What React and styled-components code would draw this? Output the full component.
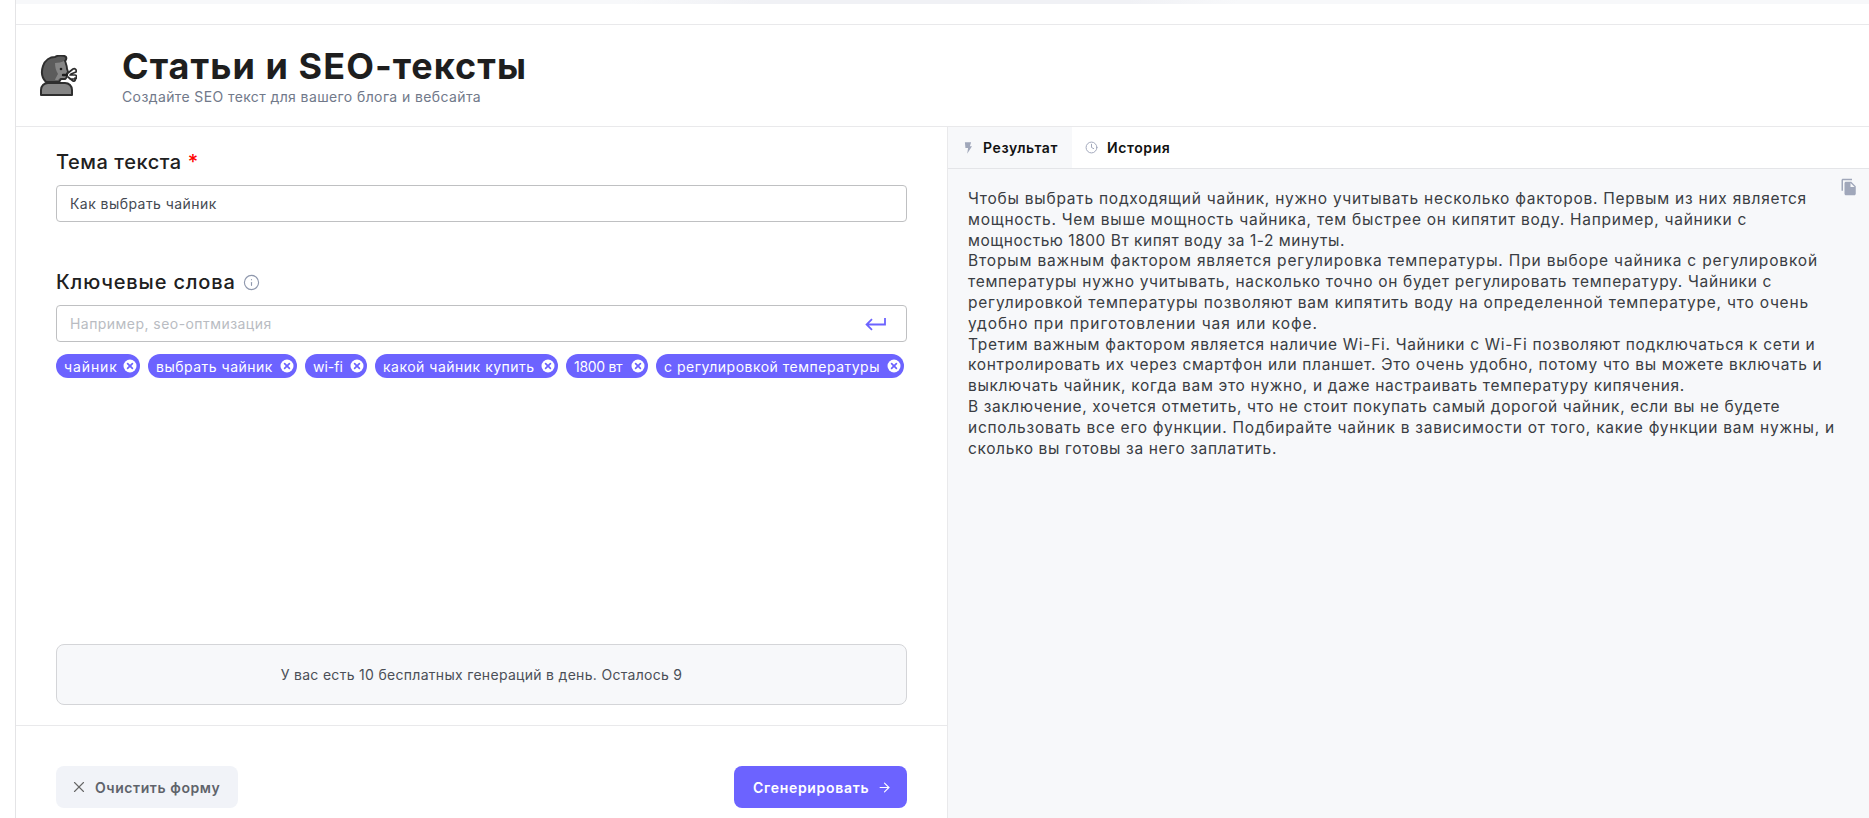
import React from "react";
import styled, { createGlobalStyle } from "styled-components";
import { MdFileCopy } from "react-icons/md";
import { X, ArrowRight, Info, Clock } from "lucide-react";

const Global = createGlobalStyle`
  html, body { margin: 0; padding: 0; background: #fff; }
  body { font-family: Inter, "Noto Sans", "Liberation Sans", sans-serif; color: #1f1f1f; overflow: hidden; }
  * { box-sizing: border-box; }
`;

const Shell = styled.div`display: flex; width: 1869px; height: 818px; overflow: hidden;`;
const Rail = styled.div`width: 16px; flex: none; border-right: 1px solid #e4e4e6;`;
const Main = styled.div`flex: 1; display: flex; flex-direction: column; min-width: 0;`;
const TopStrip = styled.div`
  height: 25px; flex: none; border-bottom: 1px solid #e9e9eb;
  background: linear-gradient(90deg, #f7f8fa 0%, #f7f8fa 33%, #f0f1f5 40%, #f0f1f5 60%, #f7f8fa 66%, #f7f8fa 100%) top / 100% 4px no-repeat;
`;
const Header = styled.header`
  height: 102px; flex: none; display: flex; align-items: center; border-bottom: 1px solid #e9e9eb; padding-left: 24px;
`;
const Avatar = styled.svg`width: 37px; height: 41px; flex: none;`;
const HeadText = styled.div`margin-left: 45px;`;
const Title = styled.h1`margin: 0; font-size: 36px; line-height: 40px; font-weight: 700; color: #1e1e1e; letter-spacing: 1.05px;`;
const Sub = styled.div`font-size: 14px; line-height: 16px; color: #71798a; letter-spacing: 0.39px; margin-top: 3px;`;
const Columns = styled.div`flex: 1; display: flex; min-height: 0;`;
const Left = styled.section`width: 932px; flex: none; display: flex; flex-direction: column; border-right: 1px solid #e9e9eb;`;
const Form = styled.div`flex: 1; padding: 21px 40px 20px; display: flex; flex-direction: column;`;
const Field = styled.div`margin-bottom: ${p => p.$gap}px;`;
const Label = styled.div`
  display: flex; align-items: center; gap: 7px; height: 28px; margin-bottom: 9px;
  font-size: 20px; font-weight: 500; color: #202020; letter-spacing: ${p => p.$s}px;
`;
const Star = styled.span`color: #f00; margin-left: -1px;`;
const InputBox = styled.div`
  height: 37px; border: 1px solid #bfc0c2; border-radius: 4px; display: flex; align-items: center; justify-content: space-between;
  padding: 0 20px 0 13px; font-size: 14px; letter-spacing: 0.45px; color: ${p => (p.$muted ? "#b9bcc2" : "#454a52")};
`;
const Tags = styled.div`display: flex; gap: 8px; margin-top: 12px;`;
const Tag = styled.span`
  height: 24px; border-radius: 12px; background: #6c63ff; color: #fff; display: inline-flex; align-items: center; justify-content: space-between;
  padding: 0 3px 0 8px; font-size: 14px; letter-spacing: ${p => p.$s}px; white-space: nowrap; width: ${p => p.$w}px;
`;
const Notice = styled.div`
  margin-top: auto; height: 61px; background: #f7f8fa; border: 1px solid #d4d5d8; border-radius: 8px; display: flex; align-items: center; justify-content: center;
  font-size: 14px; letter-spacing: 0.3px; color: #4b4f57;
`;
const Footer = styled.div`
  height: 93px; flex: none; border-top: 1px solid #e9e9eb; display: flex; justify-content: space-between; padding: 40px 40px 0;
`;
const Clear = styled.button`
  width: 182px; height: 42px; border: 0; border-radius: 8px; background: #f1f3f8; color: #5f636b; font: 600 14px Inter, sans-serif; letter-spacing: 0.57px;
  display: flex; align-items: center; gap: 7px; padding: 0 0 0 14px; white-space: nowrap;
`;
const Generate = styled.button`
  width: 173px; height: 42px; border: 0; border-radius: 8px; background: #6c63ff; color: #fff; font: 600 14px Inter, sans-serif; letter-spacing: 0.7px;
  display: flex; align-items: center; gap: 8px; padding: 0 0 0 19px;
`;
const Right = styled.section`flex: 1; display: flex; flex-direction: column; background: #f7f8fa; min-width: 0;`;
const TabBar = styled.div`height: 42px; flex: none; display: flex; background: #fff; border-bottom: 1px solid #e4e5e8;`;
const Tab = styled.div`
  height: 41px; width: ${p => p.$w}px; display: flex; align-items: center; padding-left: ${p => p.$pad}px; gap: ${p => p.$gap}px;
  background: ${p => (p.$active ? "#f7f8fa" : "#fff")}; font-size: 14px; font-weight: 600; color: #111; letter-spacing: 0.6px;
`;
const Result = styled.div`
  position: relative; flex: 1; padding: 20px 20px 0; font-size: 15.5px; line-height: 20.8px; color: #3a3d43;
`;
const Line = styled.div`white-space: nowrap; letter-spacing: ${p => p.$s}px;`;
const Copy = styled(MdFileCopy)`position: absolute; top: 9px; right: 11px; width: 18px; height: 18px; color: #a0a7ba;`;

const tags = [
  ["чайник", 84, 0.9],
  ["выбрать чайник", 149, 0.5],
  ["wi-fi", 62, 0],
  ["какой чайник купить", 183, 0.5],
  ["1800 вт", 82, -0.3],
  ["с регулировкой температуры", 248, 0.5],
];
const lines = [
  ["Чтобы выбрать подходящий чайник, нужно учитывать несколько факторов. Первым из них является", 0.751],
  ["мощность. Чем выше мощность чайника, тем быстрее он кипятит воду. Например, чайники с", 0.726],
  ["мощностью 1800 Вт кипят воду за 1-2 минуты.", 0.528],
  ["Вторым важным фактором является регулировка температуры. При выборе чайника с регулировкой", 0.833],
  ["температуры нужно учитывать, насколько точно он будет регулировать температуру. Чайники с", 0.7],
  ["регулировкой температуры позволяют вам кипятить воду на определенной температуре, что очень", 0.79],
  ["удобно при приготовлении чая или кофе.", 0.966],
  ["Третим важным фактором является наличие Wi-Fi. Чайники с Wi-Fi позволяют подключаться к сети и", 0.7],
  ["контролировать их через смартфон или планшет. Это очень удобно, потому что вы можете включать и", 0.68],
  ["выключать чайник, когда вам это нужно, и даже настраивать температуру кипячения.", 0.666],
  ["В заключение, хочется отметить, что не стоит покупать самый дорогой чайник, если вы не будете", 0.62],
  ["использовать все его функции. Подбирайте чайник в зависимости от того, какие функции вам нужны, и", 0.747],
  ["сколько вы готовы за него заплатить.", 0.64],
];

const TagClose = () => (
  <svg width="14" height="14" viewBox="0 0 14 14" style={{ flex: "none" }}>
    <circle cx="7" cy="7" r="6.5" fill="#fff" />
    <path d="M4.6 4.6l4.8 4.8M9.4 4.6l-4.8 4.8" stroke="#6c63ff" strokeWidth="1.7" strokeLinecap="round" />
  </svg>
);

export default function App() {
  return (
    <Shell>
      <Global />
      <Rail />
      <Main>
        <TopStrip />
        <Header>
          <Avatar viewBox="0 0 37 41">
            <path d="M1 40v-5c0-4 3-7 7-7h17c4 0 7 3 7 7v5z" fill="#858585" stroke="#2e2e2e" strokeWidth="2" strokeLinejoin="round" />
            <path d="M6 27C2 23 1 17 3 11 5 5 10 2 15 2c3-2 9-2 11 0 1 2 0 3-1 4 1 3 2 5 2 8l1 3-1 1c0 3 0 5-2 6h-4l-2 3H6z" fill="#5c5c5c" stroke="#2e2e2e" strokeWidth="2" strokeLinejoin="round" />
            <path d="M15 8c3 0 7-1 9-2 1 3 2 6 2 8l1 3-1 1c0 3 0 5-2 5h-4l-2 2h-3c1-3 2-4 3-6-2-3-3-7-3-11z" fill="#868686" />
            <circle cx="21" cy="14" r="1.3" fill="#1e1e1e" />
            <path d="M23 20h4" stroke="#1e1e1e" strokeWidth="2.4" strokeLinecap="round" />
            <path d="M28 18l5-4c2-1 4 1 3 3l-5 2M30 20h5c2 0 2 4 0 4h-5M28 22l5 4c2 1 3-2 2-3" fill="none" stroke="#2e2e2e" strokeWidth="1.7" strokeLinecap="round" strokeLinejoin="round" />
          </Avatar>
          <HeadText>
            <Title>Статьи и SEO-тексты</Title>
            <Sub>Создайте SEO текст для вашего блога и вебсайта</Sub>
          </HeadText>
        </Header>
        <Columns>
          <Left>
            <Form>
              <Field $gap={46}>
                <Label $s={0.55}><span>Тема текста</span><Star>*</Star></Label>
                <InputBox>Как выбрать чайник</InputBox>
              </Field>
              <Field $gap={0}>
                <Label $s={0.85}>
                  <span>Ключевые слова</span>
                  <Info size={17} color="#8f98ad" strokeWidth={1.6} />
                </Label>
                <InputBox $muted>
                  Например, seo-оптмизация
                  <svg width="21" height="14" viewBox="0 0 21 14">
                    <path d="M20 1v6.5H2M7 2.2L1.6 7.5 7 12.8" fill="none" stroke="#6c63ff" strokeWidth="1.8" />
                  </svg>
                </InputBox>
                <Tags>
                  {tags.map(([t, w, s]) => (
                    <Tag key={t} $w={w} $s={s}>{t}<TagClose /></Tag>
                  ))}
                </Tags>
              </Field>
              <Notice>У вас есть 10 бесплатных генераций в день. Осталось 9</Notice>
            </Form>
            <Footer>
              <Clear><X size={18} color="#666" strokeWidth={1.5} />Очистить форму</Clear>
              <Generate>Сгенерировать<ArrowRight size={15} strokeWidth={1.8} /></Generate>
            </Footer>
          </Left>
          <Right>
            <TabBar>
              <Tab $active $w={124} $pad={16} $gap={11}>
                <svg width="8" height="12" viewBox="0 0 9 13"><path d="M1 0h7L6.6 4.6H9L3.6 13l1-6.4H1.6z" fill="#a0a7ba" /></svg>
                Результат
              </Tab>
              <Tab $w={120} $pad={13} $gap={9}>
                <Clock size={13} color="#a0a7ba" strokeWidth={1.8} />
                История
              </Tab>
            </TabBar>
            <Result>
              <Copy />
              {lines.map(([l, s]) => <Line key={l} $s={s}>{l}</Line>)}
            </Result>
          </Right>
        </Columns>
      </Main>
    </Shell>
  );
}
